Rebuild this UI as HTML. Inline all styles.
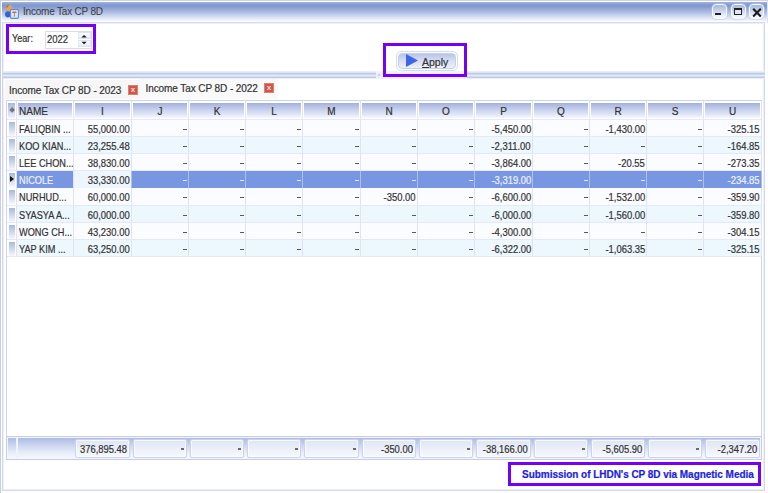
<!DOCTYPE html>
<html><head><meta charset="utf-8">
<style>
*{margin:0;padding:0;box-sizing:border-box}
html,body{width:768px;height:493px;overflow:hidden;background:#fff}
body{position:relative;font-family:"Liberation Sans",sans-serif;font-size:10px;color:#333;-webkit-text-stroke:0.2px currentColor}
.abs{position:absolute}
#frame{position:absolute;left:0;top:0;width:768px;height:493px;border-left:1px solid #c6cce9;border-top:1px solid #cdd2ec;}
#frame:after{content:"";position:absolute;right:0;top:0;width:1px;height:22px;background:#dfe3f3}
#title{position:absolute;left:2px;top:2px;width:765px;height:20px;
 background:linear-gradient(to bottom,#a3b3de 0px,#8198d0 3px,#869cd2 5px,#b4c2e6 11px,#dfe5f5 16px,#f5f7fd 19px,#fff 20px)}
#ttext{position:absolute;left:23px;top:7px;font-size:10px;color:#444;-webkit-text-stroke:0.1px #444;white-space:pre;letter-spacing:-0.2px}
#content{position:absolute;left:2px;top:22px;width:763px;height:469px;border:1px solid #d3d8ef;border-top:1px solid #d6dbf0;box-shadow:inset 1px 1px 0 #eceffa,inset -1px -1px 0 #eceffa}
.tbtn{position:absolute;top:4px;width:15px;height:15px;border:1px solid #f7f9fe;border-radius:4px;
 background:linear-gradient(to bottom,#a6b7df,#c9d4ee 45%,#eef2fa 85%,#f6f8fd);box-shadow:0 0 0.5px 0.5px #b9c5e6}
.purple{position:absolute;border:3px solid #7400f8}
.txt{position:absolute;white-space:pre;line-height:1}
#spin{position:absolute;left:45px;top:31px;width:47px;height:18px;border:1px solid #d7dcef;background:#fff}
.sb{position:absolute;left:32px;width:13px;height:7px;border:1px solid #dfe3f2;background:linear-gradient(#fff,#e6eaf6)}
#apply{position:absolute;left:396px;top:51px;width:62px;height:20px;border:1px solid #d6dcf0;border-radius:5px;background:#fff}
#applyin{position:absolute;left:1px;top:1px;width:58px;height:16px;border:1px solid #c6cfec;border-radius:4px;
 background:linear-gradient(to bottom,#b9c5e8,#d4dcf2 45%,#eef1fa)}
#splitter{position:absolute;left:3px;top:71px;width:762px;height:8px;
 background:linear-gradient(to bottom,#ebeef8 0,#ebeef8 1px,#dde3f4 1px,#dde3f4 2px,#bfcbe8 2px,#bfcbe8 3px,#cfd8ef 3px,#cfd8ef 4px,#e6eaf6 4px,#e6eaf6 5px,#d3dbf0 5px,#d3dbf0 6px,#c0cce9 6px,#c0cce9 7px,#e8ecf7 7px)}
.tab{position:absolute;top:79px;height:20px;background:#f6f6f6}
.tclose{position:absolute;width:10px;height:10px;background:#d9514d;border:1px solid #c98a6a}
.tclose:after{content:"x";position:absolute;left:2px;top:-1px;font-size:8px;color:#fbeee4;font-family:"Liberation Sans",sans-serif}
#grid{position:absolute;left:6px;top:100px;width:756px;height:336px;border:1px solid #cdd4ef;border-bottom:none}
.hc{position:absolute;top:101px;height:18px;border:1px solid #fff;border-top-width:2px;
 background:linear-gradient(to bottom,#a2b2de 0px,#adbbe3 2px,#c9d3ee 7px,#e4e9f7 12px,#f6f8fd 15px)}
.hc span{position:absolute;left:0;right:0;top:3px;text-align:center;font-size:10px;color:#333}
.hc.first span{left:1px;text-align:left}
.hc:first-child span{}
.hi{position:absolute;left:7px;top:101px;width:9px;height:18px;border:1px solid #fff;border-top-width:2px;
 background:linear-gradient(to bottom,#aab8e2 0px,#cfd8f0 9px,#f6f8fd 16px)}
.hi:after{content:"";position:absolute;left:1.5px;top:5.4px;width:4.3px;height:4.3px;background:#737783;transform:rotate(45deg)}
.row{position:absolute;left:17px;width:744px;height:17px;background:#fbfcff}
.row.alt{background:#ecf7fe}
.row.sel{background:#7896e2}
.ind{position:absolute;left:7px;width:9px;height:17px;background:#fff}
.ind:before{content:"";position:absolute;left:2px;top:2px;width:6px;height:14px;background:linear-gradient(to bottom,#a9b7e2,#e6ebf7 80%,#f6f8fd)}
.arrow{position:absolute;left:3px;top:5px;width:0;height:0;border-top:3.5px solid transparent;border-bottom:3.5px solid transparent;border-left:4px solid #111;z-index:2}
.c{position:absolute;height:17px;padding:0 1px 0 2px;font-size:10.5px;line-height:16px;color:#333;white-space:pre;overflow:hidden}
.c span{display:inline-block;transform:translateY(0.5px) scaleX(0.9);transform-origin:100% 50%}
.c.l span{transform:translateY(0.5px) scaleX(0.875);transform-origin:0 50%}
.c.l{overflow:visible}
.c.l{text-align:left;padding-left:2px}
.c.r{text-align:right}
.c.s{color:#eef3ff}
.c.focus{background:#eef6fd}
.c .d{position:absolute;right:1px;top:9px;width:4px;height:1px;background:#585858}
.c.s .d{background:#dfe7ff}
.vl{position:absolute;width:1px;background:#dfe3f5}
.hl{position:absolute;left:7px;width:754px;height:1px;background:#e4e8f7}
#foot{position:absolute;left:6px;top:436px;width:756px;height:24px;border:1px solid #c5cdec;
 background:linear-gradient(to bottom,#a9b8e1 0,#b9c6e8 4px,#d3dbf1 10px,#e9edf8 16px,#f5f7fc 21px);box-shadow:inset 0 0 0 1px #f4f6fc}
.fc{box-shadow:inset 0 0 0 1px rgba(255,255,255,0.7)}
.fc{position:absolute;top:439px;height:19px;border:1px solid #cbd2ee;border-radius:2px;
 background:linear-gradient(to bottom,#dfe5f5,#eef1fa 60%,#f7f9fd);font-size:10px;line-height:19px;text-align:right;padding-right:2px;color:#333;white-space:pre}
.fc .d{position:absolute;right:2px;top:8px;width:3px;height:1.5px;background:#6a6a6a}
.fc span{display:inline-block;transform:scaleX(0.94);transform-origin:100% 50%}
#link{position:absolute;left:508px;top:462px;width:254px;height:24px}
</style></head><body>
<div id="frame"></div>
<div id="title"></div>
<svg class="abs" style="left:4px;top:4px" width="17" height="17" viewBox="0 0 17 17">
 <defs><linearGradient id="dg" x1="0" y1="0" x2="0" y2="1"><stop offset="0" stop-color="#f4f8fd"/><stop offset="1" stop-color="#cfe6f8"/></linearGradient></defs>
 <circle cx="4.8" cy="4.4" r="3.6" fill="#dca465"/>
 <path d="M1.6 3.6Q2.5 0.6 5.6 0.9Q4 1.8 3.6 3.4Q2.6 3.2 1.6 3.6Z" fill="#a8733c"/>
 <ellipse cx="3.9" cy="10.3" rx="2.9" ry="3.1" fill="#2f63dc"/>
 <rect x="6.6" y="5.6" width="7.8" height="8.8" rx="0.8" fill="url(#dg)" stroke="#5b8fd2" stroke-width="1.1"/>
 <rect x="8.2" y="7.4" width="4.4" height="1.6" rx="0.6" fill="#d8584a"/>
 <rect x="9.8" y="8.6" width="1.3" height="4" fill="#c09070"/>
</svg>
<div id="ttext" class="txt">Income Tax CP 8D</div>
<div class="tbtn" style="left:712px"><div class="abs" style="left:2px;top:8px;width:6px;height:2px;background:#222"></div></div>
<div class="tbtn" style="left:731px"><div class="abs" style="left:2px;top:3px;width:8px;height:7px;border:1px solid #222;border-top:2px solid #222;background:#dfe6f6"></div></div>
<div class="tbtn" style="left:749px"><svg class="abs" style="left:2px;top:3px" width="10" height="10" viewBox="0 0 10 10"><path d="M1.2 0.8L8.8 8.6M8.8 0.8L1.2 8.6" stroke="#1a1a1a" stroke-width="2.1"/></svg></div>
<div id="content"></div>

<div class="purple" style="left:6px;top:24px;width:90px;height:30px"></div>
<div class="txt" style="left:12px;top:34px;font-size:10px;color:#333;transform:scaleX(0.91);transform-origin:0 0">Year:</div>
<div id="spin">
 <div class="txt" style="left:1px;top:3px;font-size:10px;color:#333;transform:scaleX(0.95);transform-origin:0 0">2022</div>
 <div class="sb" style="top:0px"></div>
 <div class="sb" style="top:8px"></div>
 <svg class="abs" style="left:0;top:0" width="47" height="18"><path d="M35.4 5.4L40.8 5.4L38.1 2.9Z" fill="#1a1a1a"/><path d="M35.4 9.8L40.8 9.8L38.1 12.3Z" fill="#1a1a1a"/></svg>
</div>

<div id="apply"><div id="applyin"></div>
 <svg class="abs" style="left:8px;top:1px" width="14" height="15" viewBox="0 0 14 15"><path d="M1 1L13 7.5L1 14Z" fill="#3d66e6"/></svg>
 <div class="txt" style="left:25px;top:5px;font-size:10.5px;color:#333"><u>A</u>pply</div>
</div>

<div id="splitter"></div>
<div class="abs" style="left:376px;top:71px;width:91px;height:8px;background:linear-gradient(to bottom,#f3f5fb,#e9edf8 50%,#eef1f9)"></div>
<div class="abs" style="left:377.5px;top:73.5px;width:2px;height:2px;border-radius:1px;background:#b4c2e6"></div>
<div class="purple" style="left:383px;top:43px;width:84px;height:34px"></div>
<div class="tab" style="left:5px;width:135px;top:80px;height:19px"></div>
<div class="tab" style="left:140px;width:138px;background:#f9f9f9"></div>
<div class="txt" style="left:9px;top:86px;font-size:10px;color:#333;letter-spacing:-0.08px">Income Tax CP 8D - 2023</div>
<div class="tclose" style="left:128px;top:85px"></div>
<div class="txt" style="left:145.5px;top:84px;font-size:10px;color:#333;letter-spacing:-0.08px">Income Tax CP 8D - 2022</div>
<div class="tclose" style="left:264px;top:83px"></div>

<div id="grid"></div>
<div class="hc first" style="left:17px;width:56px"><span>NAME</span></div>
<div class="hc" style="left:74px;width:57px"><span>I</span></div>
<div class="hc" style="left:132px;width:56px"><span>J</span></div>
<div class="hc" style="left:189px;width:56px"><span>K</span></div>
<div class="hc" style="left:246px;width:56px"><span>L</span></div>
<div class="hc" style="left:303px;width:57px"><span>M</span></div>
<div class="hc" style="left:361px;width:56px"><span>N</span></div>
<div class="hc" style="left:418px;width:56px"><span>O</span></div>
<div class="hc" style="left:475px;width:57px"><span>P</span></div>
<div class="hc" style="left:533px;width:56px"><span>Q</span></div>
<div class="hc" style="left:590px;width:56px"><span>R</span></div>
<div class="hc" style="left:647px;width:56px"><span>S</span></div>
<div class="hc" style="left:704px;width:57px"><span>U</span></div>
<div class="hi"></div>
<div class="row" style="top:120px;height:16px"></div>
<div class="ind" style="top:120px;height:16px"></div>
<div class="c l" style="left:17px;top:120px;width:56px;height:16px"><span>FALIQBIN ...</span></div>
<div class="c r" style="left:74px;top:120px;width:57px;height:16px"><span>55,000.00</span></div>
<div class="c r" style="left:132px;top:120px;width:56px;height:16px"><i class="d"></i></div>
<div class="c r" style="left:189px;top:120px;width:56px;height:16px"><i class="d"></i></div>
<div class="c r" style="left:246px;top:120px;width:56px;height:16px"><i class="d"></i></div>
<div class="c r" style="left:303px;top:120px;width:57px;height:16px"><i class="d"></i></div>
<div class="c r" style="left:361px;top:120px;width:56px;height:16px"><i class="d"></i></div>
<div class="c r" style="left:418px;top:120px;width:56px;height:16px"><i class="d"></i></div>
<div class="c r" style="left:475px;top:120px;width:57px;height:16px"><span>-5,450.00</span></div>
<div class="c r" style="left:533px;top:120px;width:56px;height:16px"><i class="d"></i></div>
<div class="c r" style="left:590px;top:120px;width:56px;height:16px"><span>-1,430.00</span></div>
<div class="c r" style="left:647px;top:120px;width:56px;height:16px"><i class="d"></i></div>
<div class="c r" style="left:704px;top:120px;width:57px;height:16px"><span>-325.15</span></div>
<div class="row alt" style="top:137px;height:16px"></div>
<div class="ind" style="top:137px;height:16px"></div>
<div class="c l" style="left:17px;top:137px;width:56px;height:16px"><span>KOO KIAN...</span></div>
<div class="c r" style="left:74px;top:137px;width:57px;height:16px"><span>23,255.48</span></div>
<div class="c r" style="left:132px;top:137px;width:56px;height:16px"><i class="d"></i></div>
<div class="c r" style="left:189px;top:137px;width:56px;height:16px"><i class="d"></i></div>
<div class="c r" style="left:246px;top:137px;width:56px;height:16px"><i class="d"></i></div>
<div class="c r" style="left:303px;top:137px;width:57px;height:16px"><i class="d"></i></div>
<div class="c r" style="left:361px;top:137px;width:56px;height:16px"><i class="d"></i></div>
<div class="c r" style="left:418px;top:137px;width:56px;height:16px"><i class="d"></i></div>
<div class="c r" style="left:475px;top:137px;width:57px;height:16px"><span>-2,311.00</span></div>
<div class="c r" style="left:533px;top:137px;width:56px;height:16px"><i class="d"></i></div>
<div class="c r" style="left:590px;top:137px;width:56px;height:16px"><i class="d"></i></div>
<div class="c r" style="left:647px;top:137px;width:56px;height:16px"><i class="d"></i></div>
<div class="c r" style="left:704px;top:137px;width:57px;height:16px"><span>-164.85</span></div>
<div class="row" style="top:154px;height:16px"></div>
<div class="ind" style="top:154px;height:16px"></div>
<div class="c l" style="left:17px;top:154px;width:56px;height:16px"><span>LEE CHON...</span></div>
<div class="c r" style="left:74px;top:154px;width:57px;height:16px"><span>38,830.00</span></div>
<div class="c r" style="left:132px;top:154px;width:56px;height:16px"><i class="d"></i></div>
<div class="c r" style="left:189px;top:154px;width:56px;height:16px"><i class="d"></i></div>
<div class="c r" style="left:246px;top:154px;width:56px;height:16px"><i class="d"></i></div>
<div class="c r" style="left:303px;top:154px;width:57px;height:16px"><i class="d"></i></div>
<div class="c r" style="left:361px;top:154px;width:56px;height:16px"><i class="d"></i></div>
<div class="c r" style="left:418px;top:154px;width:56px;height:16px"><i class="d"></i></div>
<div class="c r" style="left:475px;top:154px;width:57px;height:16px"><span>-3,864.00</span></div>
<div class="c r" style="left:533px;top:154px;width:56px;height:16px"><i class="d"></i></div>
<div class="c r" style="left:590px;top:154px;width:56px;height:16px"><span>-20.55</span></div>
<div class="c r" style="left:647px;top:154px;width:56px;height:16px"><i class="d"></i></div>
<div class="c r" style="left:704px;top:154px;width:57px;height:16px"><span>-273.35</span></div>
<div class="row sel" style="top:171px;height:17px"></div>
<div class="ind" style="top:171px;height:16px"><div class="arrow"></div></div>
<div class="c l s" style="left:17px;top:171px;width:56px;height:17px"><span>NICOLE</span></div>
<div class="c r focus" style="left:74px;top:171px;width:57px;height:17px"><span>33,330.00</span></div>
<div class="c r s" style="left:132px;top:171px;width:56px;height:17px"><i class="d"></i></div>
<div class="c r s" style="left:189px;top:171px;width:56px;height:17px"><i class="d"></i></div>
<div class="c r s" style="left:246px;top:171px;width:56px;height:17px"><i class="d"></i></div>
<div class="c r s" style="left:303px;top:171px;width:57px;height:17px"><i class="d"></i></div>
<div class="c r s" style="left:361px;top:171px;width:56px;height:17px"><i class="d"></i></div>
<div class="c r s" style="left:418px;top:171px;width:56px;height:17px"><i class="d"></i></div>
<div class="c r s" style="left:475px;top:171px;width:57px;height:17px"><span>-3,319.00</span></div>
<div class="c r s" style="left:533px;top:171px;width:56px;height:17px"><i class="d"></i></div>
<div class="c r s" style="left:590px;top:171px;width:56px;height:17px"><i class="d"></i></div>
<div class="c r s" style="left:647px;top:171px;width:56px;height:17px"><i class="d"></i></div>
<div class="c r s" style="left:704px;top:171px;width:57px;height:17px"><span>-234.85</span></div>
<div class="row" style="top:188px;height:17px"></div>
<div class="ind" style="top:188px;height:17px"></div>
<div class="c l" style="left:17px;top:188px;width:56px;height:17px"><span>NURHUD...</span></div>
<div class="c r" style="left:74px;top:188px;width:57px;height:17px"><span>60,000.00</span></div>
<div class="c r" style="left:132px;top:188px;width:56px;height:17px"><i class="d"></i></div>
<div class="c r" style="left:189px;top:188px;width:56px;height:17px"><i class="d"></i></div>
<div class="c r" style="left:246px;top:188px;width:56px;height:17px"><i class="d"></i></div>
<div class="c r" style="left:303px;top:188px;width:57px;height:17px"><i class="d"></i></div>
<div class="c r" style="left:361px;top:188px;width:56px;height:17px"><span>-350.00</span></div>
<div class="c r" style="left:418px;top:188px;width:56px;height:17px"><i class="d"></i></div>
<div class="c r" style="left:475px;top:188px;width:57px;height:17px"><span>-6,600.00</span></div>
<div class="c r" style="left:533px;top:188px;width:56px;height:17px"><i class="d"></i></div>
<div class="c r" style="left:590px;top:188px;width:56px;height:17px"><span>-1,532.00</span></div>
<div class="c r" style="left:647px;top:188px;width:56px;height:17px"><i class="d"></i></div>
<div class="c r" style="left:704px;top:188px;width:57px;height:17px"><span>-359.90</span></div>
<div class="row alt" style="top:206px;height:16px"></div>
<div class="ind" style="top:206px;height:16px"></div>
<div class="c l" style="left:17px;top:206px;width:56px;height:16px"><span>SYASYA A...</span></div>
<div class="c r" style="left:74px;top:206px;width:57px;height:16px"><span>60,000.00</span></div>
<div class="c r" style="left:132px;top:206px;width:56px;height:16px"><i class="d"></i></div>
<div class="c r" style="left:189px;top:206px;width:56px;height:16px"><i class="d"></i></div>
<div class="c r" style="left:246px;top:206px;width:56px;height:16px"><i class="d"></i></div>
<div class="c r" style="left:303px;top:206px;width:57px;height:16px"><i class="d"></i></div>
<div class="c r" style="left:361px;top:206px;width:56px;height:16px"><i class="d"></i></div>
<div class="c r" style="left:418px;top:206px;width:56px;height:16px"><i class="d"></i></div>
<div class="c r" style="left:475px;top:206px;width:57px;height:16px"><span>-6,000.00</span></div>
<div class="c r" style="left:533px;top:206px;width:56px;height:16px"><i class="d"></i></div>
<div class="c r" style="left:590px;top:206px;width:56px;height:16px"><span>-1,560.00</span></div>
<div class="c r" style="left:647px;top:206px;width:56px;height:16px"><i class="d"></i></div>
<div class="c r" style="left:704px;top:206px;width:57px;height:16px"><span>-359.80</span></div>
<div class="row" style="top:223px;height:16px"></div>
<div class="ind" style="top:223px;height:16px"></div>
<div class="c l" style="left:17px;top:223px;width:56px;height:16px"><span>WONG CH...</span></div>
<div class="c r" style="left:74px;top:223px;width:57px;height:16px"><span>43,230.00</span></div>
<div class="c r" style="left:132px;top:223px;width:56px;height:16px"><i class="d"></i></div>
<div class="c r" style="left:189px;top:223px;width:56px;height:16px"><i class="d"></i></div>
<div class="c r" style="left:246px;top:223px;width:56px;height:16px"><i class="d"></i></div>
<div class="c r" style="left:303px;top:223px;width:57px;height:16px"><i class="d"></i></div>
<div class="c r" style="left:361px;top:223px;width:56px;height:16px"><i class="d"></i></div>
<div class="c r" style="left:418px;top:223px;width:56px;height:16px"><i class="d"></i></div>
<div class="c r" style="left:475px;top:223px;width:57px;height:16px"><span>-4,300.00</span></div>
<div class="c r" style="left:533px;top:223px;width:56px;height:16px"><i class="d"></i></div>
<div class="c r" style="left:590px;top:223px;width:56px;height:16px"><i class="d"></i></div>
<div class="c r" style="left:647px;top:223px;width:56px;height:16px"><i class="d"></i></div>
<div class="c r" style="left:704px;top:223px;width:57px;height:16px"><span>-304.15</span></div>
<div class="row alt" style="top:240px;height:16px"></div>
<div class="ind" style="top:240px;height:16px"></div>
<div class="c l" style="left:17px;top:240px;width:56px;height:16px"><span>YAP KIM ...</span></div>
<div class="c r" style="left:74px;top:240px;width:57px;height:16px"><span>63,250.00</span></div>
<div class="c r" style="left:132px;top:240px;width:56px;height:16px"><i class="d"></i></div>
<div class="c r" style="left:189px;top:240px;width:56px;height:16px"><i class="d"></i></div>
<div class="c r" style="left:246px;top:240px;width:56px;height:16px"><i class="d"></i></div>
<div class="c r" style="left:303px;top:240px;width:57px;height:16px"><i class="d"></i></div>
<div class="c r" style="left:361px;top:240px;width:56px;height:16px"><i class="d"></i></div>
<div class="c r" style="left:418px;top:240px;width:56px;height:16px"><i class="d"></i></div>
<div class="c r" style="left:475px;top:240px;width:57px;height:16px"><span>-6,322.00</span></div>
<div class="c r" style="left:533px;top:240px;width:56px;height:16px"><i class="d"></i></div>
<div class="c r" style="left:590px;top:240px;width:56px;height:16px"><span>-1,063.35</span></div>
<div class="c r" style="left:647px;top:240px;width:56px;height:16px"><i class="d"></i></div>
<div class="c r" style="left:704px;top:240px;width:57px;height:16px"><span>-325.15</span></div>
<div class="vl" style="left:16px;top:101px;height:156px"></div>
<div class="vl" style="left:73px;top:101px;height:156px"></div>
<div class="vl" style="left:131px;top:101px;height:156px"></div>
<div class="vl" style="left:188px;top:101px;height:156px"></div>
<div class="vl" style="left:245px;top:101px;height:156px"></div>
<div class="vl" style="left:302px;top:101px;height:156px"></div>
<div class="vl" style="left:360px;top:101px;height:156px"></div>
<div class="vl" style="left:417px;top:101px;height:156px"></div>
<div class="vl" style="left:474px;top:101px;height:156px"></div>
<div class="vl" style="left:532px;top:101px;height:156px"></div>
<div class="vl" style="left:589px;top:101px;height:156px"></div>
<div class="vl" style="left:646px;top:101px;height:156px"></div>
<div class="vl" style="left:703px;top:101px;height:156px"></div>
<div class="vl" style="left:761px;top:101px;height:156px"></div>
<div class="vl" style="left:131px;top:171px;height:17px;background:#aebef0"></div>
<div class="vl" style="left:188px;top:171px;height:17px;background:#aebef0"></div>
<div class="vl" style="left:245px;top:171px;height:17px;background:#aebef0"></div>
<div class="vl" style="left:302px;top:171px;height:17px;background:#aebef0"></div>
<div class="vl" style="left:360px;top:171px;height:17px;background:#aebef0"></div>
<div class="vl" style="left:417px;top:171px;height:17px;background:#aebef0"></div>
<div class="vl" style="left:474px;top:171px;height:17px;background:#aebef0"></div>
<div class="vl" style="left:532px;top:171px;height:17px;background:#aebef0"></div>
<div class="vl" style="left:589px;top:171px;height:17px;background:#aebef0"></div>
<div class="vl" style="left:646px;top:171px;height:17px;background:#aebef0"></div>
<div class="vl" style="left:703px;top:171px;height:17px;background:#aebef0"></div>
<div class="vl" style="left:761px;top:171px;height:17px;background:#aebef0"></div>
<div class="hl" style="top:119px"></div>
<div class="hl" style="top:136px"></div>
<div class="hl" style="top:153px"></div>
<div class="hl" style="top:170px"></div>
<div class="hl" style="top:205px"></div>
<div class="hl" style="top:222px"></div>
<div class="hl" style="top:239px"></div>
<div class="hl" style="top:256px"></div>
<div id="foot"></div>
<div class="abs" style="left:16px;top:437px;width:2px;height:22px;background:#f0f3fb"></div>
<div class="fc" style="left:75px;width:55px"><span>376,895.48</span></div>
<div class="fc" style="left:133px;width:54px"><i class="d"></i></div>
<div class="fc" style="left:190px;width:54px"><i class="d"></i></div>
<div class="fc" style="left:247px;width:54px"><i class="d"></i></div>
<div class="fc" style="left:304px;width:55px"><i class="d"></i></div>
<div class="fc" style="left:362px;width:54px"><span>-350.00</span></div>
<div class="fc" style="left:419px;width:54px"><i class="d"></i></div>
<div class="fc" style="left:476px;width:55px"><span>-38,166.00</span></div>
<div class="fc" style="left:534px;width:54px"><i class="d"></i></div>
<div class="fc" style="left:591px;width:54px"><span>-5,605.90</span></div>
<div class="fc" style="left:648px;width:54px"><i class="d"></i></div>
<div class="fc" style="left:705px;width:55px"><span>-2,347.20</span></div>
<div class="purple" style="left:508px;top:462px;width:253px;height:24px"></div>
<div class="txt" style="left:522px;top:470px;font-size:10px;font-weight:bold;color:#1c1ce6;letter-spacing:-0.035px">Submission of LHDN's CP 8D via Magnetic Media</div>
</body></html>
